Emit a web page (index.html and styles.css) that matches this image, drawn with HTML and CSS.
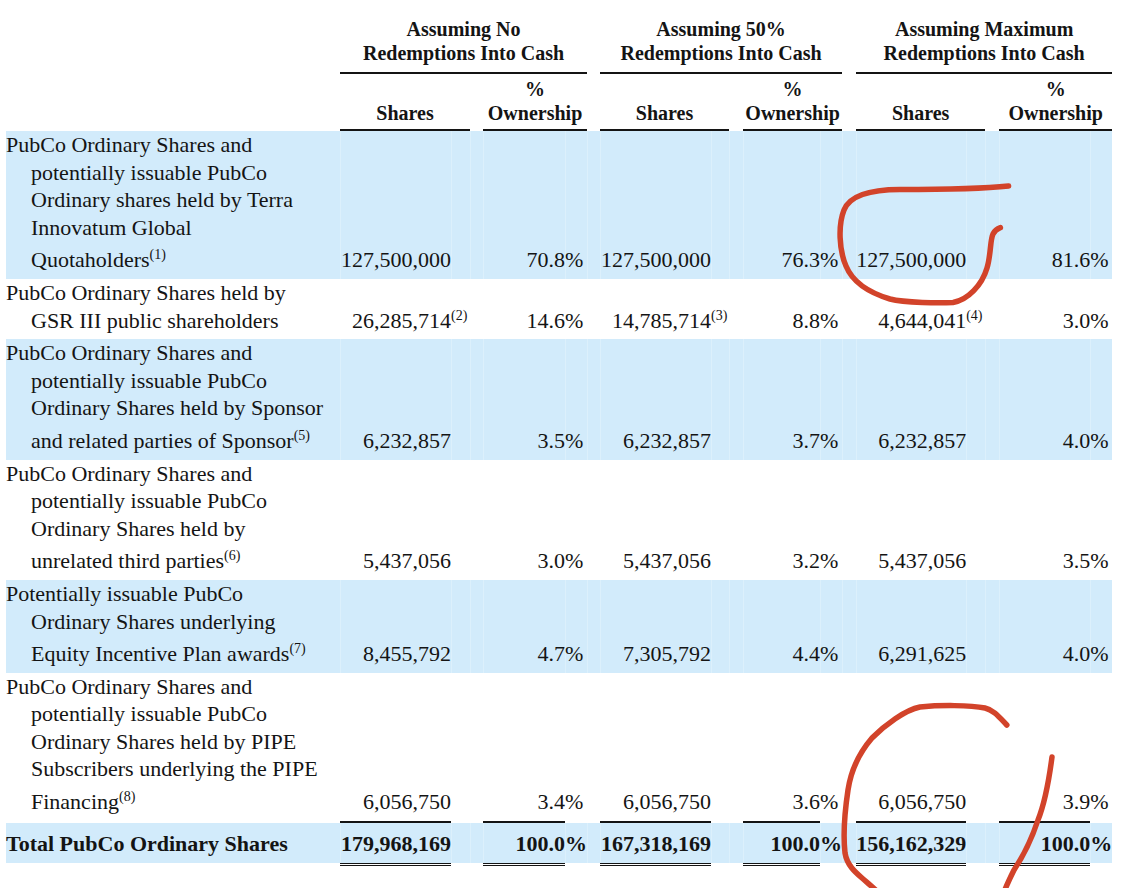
FILE: index.html
```html
<!DOCTYPE html>
<html lang="en">
<head>
<meta charset="utf-8">
<title>PubCo Ordinary Shares Ownership</title>
<link rel="stylesheet" href="styles.css">
</head>
<body>
<div class="page">
  <table class="own">
    <colgroup>
      <col class="c-label">
      <col class="c-s1"><col class="c-f19"><col class="c-g13"><col class="c-o1"><col class="c-p">
      <col class="c-g13">
      <col class="c-s2"><col class="c-f18"><col class="c-g14"><col class="c-o2"><col class="c-p">
      <col class="c-g14">
      <col class="c-s3"><col class="c-f19"><col class="c-g14"><col class="c-o3"><col class="c-p">
    </colgroup>
    <thead>
      <tr>
        <th class="blank"></th>
        <th class="grp" colspan="5">Assuming No<br>Redemptions Into Cash</th>
        <th class="blank"></th>
        <th class="grp" colspan="5">Assuming 50%<br>Redemptions Into Cash</th>
        <th class="blank"></th>
        <th class="grp" colspan="5">Assuming Maximum<br>Redemptions Into Cash</th>
      </tr>
      <tr>
        <th class="blank"></th>
        <th class="sub" colspan="2">Shares</th>
        <th class="blank"></th>
        <th class="sub" colspan="2">%<br>Ownership</th>
        <th class="blank"></th>
        <th class="sub" colspan="2">Shares</th>
        <th class="blank"></th>
        <th class="sub" colspan="2">%<br>Ownership</th>
        <th class="blank"></th>
        <th class="sub" colspan="2">Shares</th>
        <th class="blank"></th>
        <th class="sub" colspan="2">%<br>Ownership</th>
      </tr>
    </thead>
    <tbody>
      <tr class="shade">
        <td class="lbl">PubCo Ordinary Shares and<br>potentially issuable PubCo<br>Ordinary shares held by Terra<br>Innovatum Global<br>Quotaholders<sup>(1)</sup></td>
        <td class="num">127,500,000</td><td class="fn"></td><td></td><td class="num">70.8</td><td class="pct">%</td>
        <td></td>
        <td class="num">127,500,000</td><td class="fn"></td><td></td><td class="num">76.3</td><td class="pct">%</td>
        <td></td>
        <td class="num">127,500,000</td><td class="fn"></td><td></td><td class="num">81.6</td><td class="pct">%</td>
      </tr>
      <tr>
        <td class="lbl">PubCo Ordinary Shares held by<br>GSR III public shareholders</td>
        <td class="num">26,285,714</td><td class="fn"><sup>(2)</sup></td><td></td><td class="num">14.6</td><td class="pct">%</td>
        <td></td>
        <td class="num">14,785,714</td><td class="fn"><sup>(3)</sup></td><td></td><td class="num">8.8</td><td class="pct">%</td>
        <td></td>
        <td class="num">4,644,041</td><td class="fn"><sup>(4)</sup></td><td></td><td class="num">3.0</td><td class="pct">%</td>
      </tr>
      <tr class="shade">
        <td class="lbl">PubCo Ordinary Shares and<br>potentially issuable PubCo<br>Ordinary Shares held by Sponsor<br>and related parties of Sponsor<sup>(5)</sup></td>
        <td class="num">6,232,857</td><td class="fn"></td><td></td><td class="num">3.5</td><td class="pct">%</td>
        <td></td>
        <td class="num">6,232,857</td><td class="fn"></td><td></td><td class="num">3.7</td><td class="pct">%</td>
        <td></td>
        <td class="num">6,232,857</td><td class="fn"></td><td></td><td class="num">4.0</td><td class="pct">%</td>
      </tr>
      <tr>
        <td class="lbl">PubCo Ordinary Shares and<br>potentially issuable PubCo<br>Ordinary Shares held by<br>unrelated third parties<sup>(6)</sup></td>
        <td class="num">5,437,056</td><td class="fn"></td><td></td><td class="num">3.0</td><td class="pct">%</td>
        <td></td>
        <td class="num">5,437,056</td><td class="fn"></td><td></td><td class="num">3.2</td><td class="pct">%</td>
        <td></td>
        <td class="num">5,437,056</td><td class="fn"></td><td></td><td class="num">3.5</td><td class="pct">%</td>
      </tr>
      <tr class="shade">
        <td class="lbl">Potentially issuable PubCo<br>Ordinary Shares underlying<br>Equity Incentive Plan awards<sup>(7)</sup></td>
        <td class="num">8,455,792</td><td class="fn"></td><td></td><td class="num">4.7</td><td class="pct">%</td>
        <td></td>
        <td class="num">7,305,792</td><td class="fn"></td><td></td><td class="num">4.4</td><td class="pct">%</td>
        <td></td>
        <td class="num">6,291,625</td><td class="fn"></td><td></td><td class="num">4.0</td><td class="pct">%</td>
      </tr>
      <tr>
        <td class="lbl">PubCo Ordinary Shares and<br>potentially issuable PubCo<br>Ordinary Shares held by PIPE<br>Subscribers underlying the PIPE<br>Financing<sup>(8)</sup></td>
        <td class="num">6,056,750</td><td class="fn"></td><td></td><td class="num">3.4</td><td class="pct">%</td>
        <td></td>
        <td class="num">6,056,750</td><td class="fn"></td><td></td><td class="num">3.6</td><td class="pct">%</td>
        <td></td>
        <td class="num">6,056,750</td><td class="fn"></td><td></td><td class="num">3.9</td><td class="pct">%</td>
      </tr>
      <tr class="shade total">
        <td class="lbl">Total PubCo Ordinary Shares</td>
        <td class="num">179,968,169</td><td class="fn"></td><td></td><td class="num">100.0</td><td class="pct">%</td>
        <td></td>
        <td class="num">167,318,169</td><td class="fn"></td><td></td><td class="num">100.0</td><td class="pct">%</td>
        <td></td>
        <td class="num">156,162,329</td><td class="fn"></td><td></td><td class="num">100.0</td><td class="pct">%</td>
      </tr>
    </tbody>
  </table>

  <svg class="marks" width="1125" height="888" viewBox="0 0 1125 888" aria-hidden="true">
    <path d="M1008.6,186 C990,188 960,189.5 900,189.5 C870,189.5 850,195 844,210 C838,225 839,250 846,266 C853,283 870,293 890,299 C905,303 940,303 953,302.5 C968,300 982,285 987,268 C991,255 990,240 993,234 C995,230 998,228.5 1000.4,227.7"/>
    <path d="M1006.8,725 C1000,718 994,710 985,708 C970,705 940,705 920,707 C905,710 885,725 872,738 C860,752 851,770 848,790 C845,810 843,835 845,853 C847,865 855,872 862,878 C870,885 876,890 882,896"/>
    <path d="M1052,757 C1049,780 1044,805 1038,820 C1032,838 1022,858 1014,870 C1010,878 1006,886 1003,895"/>
  </svg>
</div>
</body>
</html>
```

FILE: styles.css
```css
html, body {
  margin: 0;
  padding: 0;
  background: #ffffff;
}

body {
  overflow: hidden;
  font-family: "Liberation Serif", "Times New Roman", serif;
  color: #141414;
}

.page {
  position: relative;
  width: 1125px;
  height: 888px;
  box-sizing: border-box;
  padding: 17px 0 0 6px;
}

/* table */
.own {
  width: 1106px;
  table-layout: fixed;
  border-collapse: separate;
  border-spacing: 0;
}

.own th,
.own td {
  padding: 0;
  vertical-align: bottom;
}

.c-label { width: 334px; }
.c-s1 { width: 111px; }
.c-s2 { width: 111px; }
.c-s3 { width: 110px; }
.c-o1 { width: 82px; }
.c-o2 { width: 77px; }
.c-o3 { width: 91px; }
.c-p { width: 22px; }
.c-f18 { width: 18px; }
.c-f19 { width: 19px; }
.c-g13 { width: 13px; }
.c-g14 { width: 14px; }

/* header */
.own th.grp,
.own th.sub {
  font-size: 20px;
  line-height: 24px;
  font-weight: bold;
  text-align: center;
  border-bottom: 2px solid #141414;
}

.own th.grp {
  padding-bottom: 7px;
}

.own th.sub {
  padding-top: 3px;
  padding-bottom: 4px;
}

/* body */
.own tbody td {
  font-size: 22px;
  line-height: 27.6px;
  padding-bottom: 5px;
  white-space: nowrap;
}

.own tbody td.lbl {
  padding-left: 25px;
  text-indent: -25px;
}

.num {
  text-align: right;
}

.pct,
.fn {
  text-align: left;
}

sup {
  font-size: 14px;
  line-height: 27px;
  vertical-align: 8px;
}

.shade td {
  background-color: #d2ebfb;
}

.shade td + td {
  background-image: linear-gradient(90deg, #dcf0fc 0, #dcf0fc 1px, transparent 1px);
}

/* total */
.own tbody .total td {
  font-weight: bold;
  padding-top: 7px;
  padding-bottom: 6px;
  border-top: 2px solid transparent;
  border-bottom: 3px double transparent;
  background-clip: padding-box;
}

.own tbody .total td.num {
  border-top-color: #141414;
  border-bottom-color: #141414;
}

/* hand-drawn annotations */
.marks {
  position: absolute;
  left: 0;
  top: 0;
  pointer-events: none;
  fill: none;
  stroke: #d2432a;
  stroke-width: 5.5;
  stroke-linecap: round;
  stroke-linejoin: round;
}
```
